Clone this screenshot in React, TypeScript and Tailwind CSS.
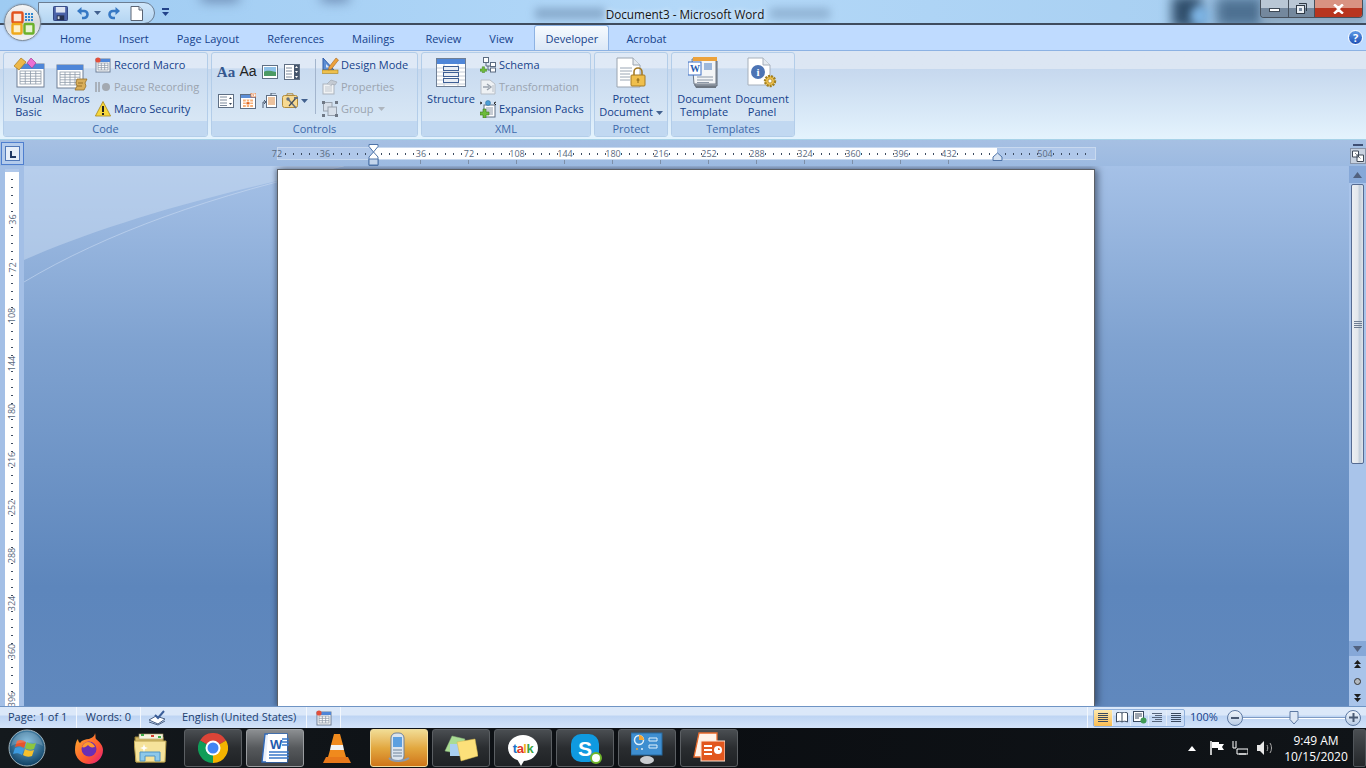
import React from 'react';

const FONT = "font-['Open_Sans','Noto_Sans',sans-serif]";

const SheetGrid = ({ x, y, w, h, cols = 4, rows = 5 }: { x: number; y: number; w: number; h: number; cols?: number; rows?: number }) => (
  <g stroke="#8d99a8" strokeWidth="0.8">
    <rect x={x} y={y} width={w} height={h} fill="#fff" />
    {Array.from({ length: rows - 1 }, (_, i) => (
      <line key={i} x1={x} x2={x + w} y1={y + ((i + 1) * h) / rows} y2={y + ((i + 1) * h) / rows} />
    ))}
    {Array.from({ length: cols - 1 }, (_, i) => (
      <line key={i} y1={y} y2={y + h} x1={x + ((i + 1) * w) / cols} x2={x + ((i + 1) * w) / cols} />
    ))}
  </g>
);

const VisualBasicIcon = () => (
  <svg width="32" height="32" viewBox="0 0 32 32">
    <rect x="4" y="7" width="27" height="23" fill="#fff" stroke="#6f7f95" />
    <rect x="4" y="7" width="27" height="5" fill="#4f86d8" />
    <SheetGrid x={7} y={14} w={21} h={13} />
    <path d="M1 9l7-8 5 4-7 8z" fill="#eeb849" stroke="#a97a1a" strokeWidth="0.7" />
    <path d="M14 6l4-5 5 5-4 5z" fill="#ec6fd3" stroke="#a53e95" strokeWidth="0.7" />
  </svg>
);

const MacrosIcon = () => (
  <svg width="32" height="32" viewBox="0 0 32 32" className="overflow-visible">
    <rect x="2" y="8" width="26" height="23" fill="#fff" stroke="#6f7f95" />
    <rect x="2" y="8" width="26" height="5" fill="#4f86d8" />
    <SheetGrid x={5} y={15} w={20} h={13} />
    <path d="M22 22h10l-2 4 1 3-2 4H20l2-4-1-3z" fill="#d9ae5a" stroke="#96702a" strokeWidth="0.8" />
    <path d="M23 26h5M22 29h5" stroke="#96702a" />
  </svg>
);

const RecordIcon = () => (
  <svg width="16" height="16" viewBox="0 0 16 16">
    <rect x="1" y="2" width="14" height="13" fill="#fff" stroke="#6f7f95" />
    <rect x="1" y="2" width="14" height="3" fill="#4f86d8" />
    <SheetGrid x={3} y={6} w={10} h={7} cols={3} rows={3} />
    <circle cx="3" cy="3" r="2.6" fill="#e2503c" />
  </svg>
);

const PauseIcon = () => (
  <svg width="16" height="16" viewBox="0 0 16 16">
    <rect x="0" y="3" width="2" height="10" fill="#a9b1bb" />
    <rect x="3" y="3" width="2" height="10" fill="#a9b1bb" />
    <circle cx="11" cy="8" r="4" fill="#a3a9b1" />
  </svg>
);

const WarningIcon = () => (
  <svg width="16" height="16" viewBox="0 0 16 16">
    <path d="M8 .5L15.6 15H.4z" fill="#f6d73c" stroke="#a8871a" strokeWidth="0.8" />
    <rect x="7" y="5" width="2" height="6" fill="#222" />
    <rect x="7" y="12" width="2" height="2" fill="#222" />
  </svg>
);

const PictureIcon = () => (
  <svg width="16" height="16" viewBox="0 0 16 16">
    <rect x=".5" y="1.5" width="15" height="13" fill="#fff" stroke="#5f6f84" />
    <rect x="2" y="3" width="12" height="5" fill="#8fc1e8" />
    <path d="M2 12V8c3-2 6-1 12 0v4z" fill="#4c9a63" />
  </svg>
);

const ComboIcon = () => (
  <svg width="16" height="16" viewBox="0 0 16 16">
    <rect x=".5" y=".5" width="15" height="15" fill="#fff" stroke="#5f6f84" />
    <rect x="10" y="1" width="5" height="14" fill="#46566c" />
    <path d="M2 4h6M2 7h6M2 10h6M2 13h6" stroke="#7d8a9c" />
    <path d="M11 4h3l-1.5-2zM11 7h3l-1.5 2zM11 12h3l-1.5 2z" fill="#fff" />
  </svg>
);

const SpinIcon = () => (
  <svg width="16" height="16" viewBox="0 0 16 16">
    <rect x=".5" y="1.5" width="15" height="13" fill="#fff" stroke="#5f6f84" />
    <path d="M2 4h7M2 7h7M2 10h7M2 12.5h7" stroke="#7d8a9c" />
    <path d="M11 6h3l-1.5-2zM11 10h3l-1.5 2z" fill="#3a4a5e" />
  </svg>
);

const CalendarIcon = () => (
  <svg width="16" height="16" viewBox="0 0 16 16">
    <rect x=".5" y="1.5" width="15" height="14" fill="#fff" stroke="#5f6f84" />
    <rect x="1" y="2" width="14" height="3" fill="#5c8ed6" />
    <rect x="11" y="0" width="5" height="4" fill="#fff" stroke="#d96b2b" strokeWidth="0.8" />
    <path d="M12 1.500h2.500L13.200 3z" fill="#d96b2b" />
    <rect x="3" y="6.500" width="10" height="7.500" fill="#f6b07a" />
    <path d="M3 9h10M3 11.500h10M6.300 6.500v7.500M9.700 6.500v7.500" stroke="#fff" />
    <rect x="6.500" y="9.200" width="3" height="2.200" fill="#e2641c" />
  </svg>
);

const LegacyIcon = () => (
  <svg width="16" height="16" viewBox="0 0 16 16">
    <rect x="4.5" y="2.5" width="10" height="12" fill="#fff" stroke="#5f6f84" />
    <path d="M6 5h7M6 7h7M6 9h7M6 11h7" stroke="#d7853e" />
    <path d="M1 15V9h3M2 7l2 2-2 2M9 2V0h5" fill="none" stroke="#4a5a70" />
  </svg>
);

const ToolsIcon = () => (
  <svg width="18" height="17" viewBox="0 0 18 17">
    <rect x=".5" y="2.500" width="15" height="12" rx="2" fill="#f6d991" stroke="#b08a3c" />
    <path d="M5 2.500V.8h6v1.700" fill="none" stroke="#b08a3c" />
    <path d="M6 6l8 9" stroke="#66707e" strokeWidth="1.600" />
    <path d="M14 5l-7 8" stroke="#3f4a58" strokeWidth="1.200" />
    <path d="M12 4h4v2h-4z" fill="#66707e" />
    <circle cx="6" cy="6" r="1.700" fill="#66707e" />
  </svg>
);

const DesignIcon = () => (
  <svg width="17" height="17" viewBox="0 0 17 17">
    <path d="M1 1v12h11z" fill="#5c8ed6" stroke="#2c5aa8" />
    <path d="M4 7v3.5h3.5z" fill="#dbe6f4" />
    <rect x="0" y="13" width="16" height="3.5" fill="#eec04d" stroke="#a5801f" strokeWidth="0.6" />
    <path d="M7 10l7-9 2.5 2-7 9-3 1z" fill="#eca23c" stroke="#a8641c" strokeWidth="0.6" />
  </svg>
);

const PropertiesIcon = () => (
  <svg width="16" height="16" viewBox="0 0 16 16">
    <rect x="1" y="5" width="11" height="10" fill="#f0f2f4" stroke="#abb3bd" />
    <path d="M3 8h7M3 10h7M3 12h7" stroke="#c1c7ce" />
    <path d="M5 5l4-4 6 2-2 3-3-1-1 2" fill="#c4cad2" stroke="#a3abb5" strokeWidth="0.7" />
  </svg>
);

const GroupIcon = () => (
  <svg width="16" height="16" viewBox="0 0 16 16">
    <rect x="1.5" y="1.5" width="8.5" height="8.5" fill="#d7dfe9" stroke="#98a1ad" />
    <rect x="6" y="6" width="8.5" height="8.5" fill="#d7dfe9" stroke="#98a1ad" />
    <path d="M0 0h3v3H0zM13 0h3v3h-3zM0 13h3v3H0zM13 13h3v3h-3z" fill="#6f7885" />
  </svg>
);

const StructureIcon = () => (
  <svg width="30" height="30" viewBox="0 0 30 30">
    <rect x=".5" y=".5" width="29" height="28" fill="#fff" stroke="#6f7f95" />
    <rect x="1" y="1" width="28" height="5" fill="#4f86d8" />
    <path d="M1 10h28M1 14h28M1 18h28M1 22h28M1 26h28M8 6v22M22 6v22" stroke="#c5ccd6" />
    <g fill="#e8edf5" stroke="#3e5f95">
      <rect x="7.5" y="8.5" width="15" height="4" />
      <rect x="7.5" y="14.5" width="15" height="4" />
      <rect x="7.5" y="20.5" width="15" height="4" />
    </g>
  </svg>
);

const SchemaIcon = () => (
  <svg width="16" height="16" viewBox="0 0 16 16">
    <g fill="#fff" stroke="#5a6a80">
      <rect x="3.5" y=".5" width="5" height="5" />
      <rect x="10.5" y="5.5" width="5" height="4" />
      <rect x="10.5" y="11" width="5" height="4" />
    </g>
    <path d="M6 6v3h4M8 9v4h2" fill="none" stroke="#5a6a80" />
    <path d="M3 8v3H0v3h3v2h3v-2h3v-3H6V8z" fill="#6dbb3c" stroke="#3d7a1e" strokeWidth="0.6" transform="scale(.75) translate(0 5)" />
  </svg>
);

const TransformIcon = () => (
  <svg width="16" height="16" viewBox="0 0 16 16">
    <path d="M1 1h9l5 4v10H1z" fill="#eef1f4" stroke="#b6bdc6" />
    <path d="M3 8h6M7 5l4 3-4 3" fill="none" stroke="#9aa2ad" strokeWidth="1.4" />
    <path d="M13 6v7" stroke="#b6bdc6" />
  </svg>
);

const ExpansionIcon = () => (
  <svg width="16" height="18" viewBox="0 0 16 18">
    <rect x="4" y="5" width="11" height="12" fill="#fff" stroke="#5f6f84" />
    <path d="M6 8h7M6 10h7M6 12h7M6 14h7" stroke="#8d99a8" />
    <path d="M2 3L0 2m2 1L0 4M14 3l2-1m-2 1l2 2" stroke="#222" />
    <circle cx="8" cy="3" r="2.5" fill="#4d9fd6" stroke="#2c6a98" strokeWidth="0.5" />
    <path d="M3 9v3H0v3h3v3h3v-3h3v-3H6V9z" fill="#6dbb3c" stroke="#3d7a1e" strokeWidth="0.6" />
  </svg>
);

const ProtectIcon = () => (
  <svg width="32" height="32" viewBox="0 0 32 32">
    <path d="M2 1h16l7 7v22H2z" fill="#fff" stroke="#9aa4b0" />
    <path d="M18 1v7h7" fill="#e4e9ef" stroke="#9aa4b0" />
    <path d="M5 11h12M5 14h12M5 17h10M5 20h10M5 23h10" stroke="#9aa6b4" />
    <path d="M19 18v-3a4 4 0 018 0v3" fill="none" stroke="#a47a25" strokeWidth="1.6" />
    <rect x="16" y="18" width="14" height="11" rx="1" fill="#efbf4c" stroke="#a47a25" />
    <path d="M23 21v5M21.5 23h3" stroke="#8a6415" />
  </svg>
);

const TemplateIcon = () => (
  <svg width="32" height="32" viewBox="0 0 32 32">
    <path d="M5 4h24v25H7z" fill="#aab2bc" stroke="#5d6672" />
    <path d="M4 2h24v25H6z" fill="#f3f5f7" stroke="#6c7684" />
    <rect x="5" y="0" width="24" height="4" fill="#eca23c" />
    <rect x="0" y="5" width="13" height="13" fill="#fff" stroke="#3c6fc4" />
    <text x="2" y="15" fontSize="10" fontWeight="700" fill="#2a5db0" fontFamily="Liberation Serif, serif">W</text>
    <rect x="16" y="6" width="8" height="7" fill="#9db8dc" />
    <path d="M9 20h16M9 23h16M9 25.5h12" stroke="#8d99a8" />
    <path d="M7 29h21v2H8z" fill="#6e7782" />
  </svg>
);

const PanelIcon = () => (
  <svg width="32" height="32" viewBox="0 0 32 32">
    <path d="M2 1h15l7 7v20H2z" fill="#fff" stroke="#a7b0bb" />
    <path d="M17 1v7h7" fill="#e4e9ef" stroke="#a7b0bb" />
    <circle cx="12" cy="15" r="7" fill="#4d74b4" />
    <text x="12" y="19" fontSize="11" fontWeight="700" textAnchor="middle" fill="#fff" fontFamily="Liberation Serif, serif">i</text>
    <circle cx="24" cy="24" r="5" fill="#eec04d" stroke="#a3801f" strokeWidth="2.4" strokeDasharray="2 1" />
    <circle cx="24" cy="24" r="2" fill="#fff" stroke="#a3801f" strokeWidth="0.7" />
  </svg>
);

const OfficeLogo = () => (
  <svg width="24" height="24" viewBox="0 0 24 24">
    <rect x="1.500" y="1.500" width="10" height="10" rx="1" fill="#fbe7d8" stroke="#e2531c" strokeWidth="2.400" />
    <rect x="1.500" y="13" width="9" height="9.500" rx="1" fill="#fdf0c8" stroke="#f0a91c" strokeWidth="2.400" />
    <rect x="13.500" y="13" width="9" height="9.500" rx="1" fill="#e7f3d0" stroke="#6cb12a" strokeWidth="2.400" />
    <g fill="#2f86cf">
      <rect x="14" y="2" width="2" height="2" />
      <rect x="17" y="2" width="2" height="2" />
      <rect x="20" y="2" width="2" height="2" />
      <rect x="14" y="5" width="2" height="2" />
      <rect x="17" y="5" width="2" height="2" />
      <rect x="20" y="5" width="2" height="2" />
      <rect x="14" y="8" width="2" height="2" />
      <rect x="17" y="8" width="2" height="2" />
      <rect x="20" y="8" width="2" height="2" />
    </g>
  </svg>
);

const SaveIcon = () => (
  <svg width="15" height="15" viewBox="0 0 16 16">
    <rect x=".5" y=".5" width="15" height="15" rx="1" fill="#4a62a8" stroke="#2c3f7c" />
    <rect x="3" y="1" width="10" height="6" fill="#dde4f2" />
    <rect x="4" y="10" width="8" height="5" fill="#25304f" />
    <rect x="5" y="11" width="2" height="3" fill="#c8d0e0" />
  </svg>
);

const UndoIcon = ({ flip = false }: { flip?: boolean }) => (
  <svg width="14" height="14" viewBox="0 0 14 14" className={flip ? '-scale-x-100' : ''}>
    <path d="M3 5h5a3.5 3.5 0 010 7H6" fill="none" stroke="#3678c4" strokeWidth="2.6" />
    <path d="M5.5 1v8L1 5z" fill="#3678c4" />
  </svg>
);

const Caret = ({ color = '#42618f' }: { color?: string }) => (
  <svg width="7" height="4" viewBox="0 0 7 4">
    <path d="M0 0h7L3.5 4z" fill={color} />
  </svg>
);

const LargeButton = ({ icon, lines, w, caret }: { icon: React.ReactNode; lines: string[]; w: string; caret?: boolean }) => (
  <div className={`flex shrink-0 flex-col items-center ${w}`}>
    <div className="flex h-[36px] items-center justify-center pt-[2px]">{icon}</div>
    <div className="mt-[2px] text-center leading-[13px] whitespace-nowrap">
      {lines.map((l, i) => (
        <div key={l}>
          {l}
          {caret && i === lines.length - 1 && <span className="ml-[3px] inline-block align-middle"><Caret /></span>}
        </div>
      ))}
    </div>
  </div>
);

const SmallButton = ({ icon, label, disabled, caret }: { icon: React.ReactNode; label: string; disabled?: boolean; caret?: boolean }) => (
  <div className={`flex h-[22px] items-center whitespace-nowrap ${disabled ? 'text-[#9ba4b0]' : ''}`}>
    <span className="flex w-[18px] shrink-0 items-center">{icon}</span>
    <span className="ml-px">{label}</span>
    {caret && <span className="ml-[4px]"><Caret color="#aeb5be" /></span>}
  </div>
);

const Group = ({ title, w, children }: { title: string; w: string; children: React.ReactNode }) => (
  <div className={`flex h-[85px] shrink-0 flex-col overflow-hidden rounded-[3px] border border-[#b3cde9] bg-gradient-to-b from-[#dfe9f6] from-[18%] via-[#c9dbf0] via-[19%] to-[#dceaf6] ${w}`}>
    <div className="h-[68px] flex-1">{children}</div>
    <div className="h-[15px] bg-[#c1d8f1] text-center leading-[15px] text-[#3e6aaa]">{title}</div>
  </div>
);

const TABS = ['Home', 'Insert', 'Page Layout', 'References', 'Mailings', 'Review', 'View'];

const TitleBar = () => (
  <div className="relative h-[25px] shrink-0 overflow-hidden border-b-2 border-[#3f4c5e] bg-gradient-to-r from-[#9ecbf2] via-[#b3d8f8] to-[#a5cdf0]">
    <div className="absolute left-[200px] top-[-8px] h-[10px] w-[40px] rounded-full bg-[#6a88b0] blur-[6px]" />
    <div className="absolute left-[320px] top-[-8px] h-[10px] w-[30px] rounded-full bg-[#6a88b0] blur-[6px]" />
    <div className="absolute left-[535px] top-[8px] h-[11px] w-[70px] bg-[#5f7ea0] opacity-50 blur-[4px]" />
    <div className="absolute left-[770px] top-[8px] h-[11px] w-[60px] bg-[#5f7ea0] opacity-40 blur-[4px]" />
    <div className="absolute left-[1172px] top-[-4px] h-[32px] w-[30px] bg-[#2f4d6a] blur-[6px]" />
    <div className="absolute left-[1215px] top-[-4px] h-[32px] w-[50px] bg-[#4d7091] blur-[7px]" />
    <div className="absolute left-[1262px] top-0 h-[25px] w-[104px] bg-[#8ba6be] blur-[4px]" />
    <div className="absolute left-[1190px] top-[6px] h-[20px] w-[20px] rounded-full bg-[#7db4e4] blur-[4px]" />

    {/* quick access toolbar */}
    <div className="absolute left-[38px] top-[2px] flex h-[22px] w-[117px] items-center rounded-r-[12px] border border-[#6b7d92] bg-gradient-to-b from-[#cfe6fa] to-[#b4d5f2] pl-[14px]">
      <SaveIcon />
      <span className="ml-[8px]"><UndoIcon /></span>
      <span className="ml-[4px]"><Caret /></span>
      <span className="ml-[6px]"><UndoIcon flip /></span>
      <span className="ml-[9px]">
        <svg width="13" height="15" viewBox="0 0 13 15">
          <path d="M1 .5h8l3.5 3.5v10.5H1z" fill="#fff" stroke="#5a6474" />
          <path d="M9 .5V4h3.5" fill="#dfe4ea" stroke="#5a6474" />
        </svg>
      </span>
    </div>
    <div className="absolute left-[162px] top-[8px] flex flex-col items-center gap-[2px]">
      <div className="h-[2px] w-[7px] bg-[#22438a]" />
      <Caret color="#22438a" />
    </div>

    <div className="relative flex h-full items-center justify-center pl-[4px] pt-[6px] text-[11.75px] text-[#151515] [text-shadow:0_0_5px_#ffffff]">
      Document3 - Microsoft Word
    </div>

    {/* window buttons */}
    <div className="absolute right-[3px] top-0 flex h-[18px] w-[103px] overflow-hidden rounded-b-[4px] border border-t-0 border-[#46505c]">
      <div className="flex w-[28px] items-center justify-center border-r border-[#46505c] bg-gradient-to-b from-[#b9c7d5] from-50% to-[#74889d] to-50%">
        <div className="mt-[3px] h-[4px] w-[11px] border border-[#3d4854] bg-white" />
      </div>
      <div className="flex w-[26px] items-center justify-center border-r border-[#46505c] bg-gradient-to-b from-[#b9c7d5] from-50% to-[#74889d] to-50%">
        <svg width="11" height="11" viewBox="0 0 11 11">
          <path d="M3 .5h7.5V8" fill="none" stroke="#2f3a46" />
          <rect x=".5" y="2.5" width="8" height="8" fill="#e9eef3" stroke="#2f3a46" />
          <rect x="3" y="5" width="3" height="3" fill="#75899e" />
        </svg>
      </div>
      <div className="flex flex-1 items-center justify-center bg-gradient-to-b from-[#d99382] from-50% to-[#b8351f] to-50%">
        <svg width="11" height="10" viewBox="0 0 11 10">
          <path d="M1 .5l4.5 3.5L10 .5M1 9.5L5.5 6 10 9.5M2 1l7 8M9 1L2 9" fill="none" stroke="#fff" strokeWidth="2.4" />
        </svg>
      </div>
    </div>
  </div>
);

const OfficeButton = () => (
  <div className="absolute left-[4px] top-[4px] z-10 flex h-[37px] w-[37px] items-center justify-center rounded-full border border-[#7f8c9a] bg-gradient-to-b from-[#f6f7f8] via-[#d6d9dc] to-[#f2f3f3] shadow-[0_0_2px_#7d8fa5]">
    <OfficeLogo />
  </div>
);

const TabsRow = () => (
  <div className="flex h-[25px] shrink-0 items-end bg-[#bfdbff] pl-[46px] text-[#15428b]">
    {TABS.map((t) => (
      <div key={t} className={`flex h-[24px] items-center px-[14px] pt-[2px] whitespace-nowrap ${t === 'Review' ? 'ml-[3px]' : ''}`}>
        {t}
      </div>
    ))}
    <div className="ml-[7px] flex h-[25px] w-[75px] items-center justify-center rounded-t-[3px] border border-b-0 border-[#8db2e3] bg-gradient-to-b from-[#f6fafe] to-[#dbe8f7] pt-[2px]">
      Developer
    </div>
    <div className="flex h-[24px] items-center px-[17px] pt-[2px]">Acrobat</div>
    <div className="mb-[5px] ml-auto mr-[3px] flex h-[15px] w-[15px] items-center justify-center rounded-full border border-white bg-gradient-to-b from-[#5f9ae6] to-[#1f4fb5] text-[11px] leading-none font-bold text-white">
      ?
    </div>
  </div>
);

const Ribbon = () => (
  <div className="flex h-[90px] shrink-0 gap-[3px] border-y border-t-[#8db2e3] border-b-[#a7d2e8] bg-gradient-to-b from-[#dce6f3] from-[20%] via-[#c6d8ee] via-[21%] to-[#e4f3fd] pl-[3px] pt-[1px] text-[#15428b]">
    <Group title="Code" w="w-[205px]">
      <div className="flex pt-[1px] pl-px">
        <LargeButton icon={<VisualBasicIcon />} lines={['Visual', 'Basic']} w="w-[47px]" />
        <LargeButton icon={<MacrosIcon />} lines={['Macros']} w="w-[38px]" />
        <div className="ml-[5px]">
          <SmallButton icon={<RecordIcon />} label="Record Macro" />
          <SmallButton icon={<PauseIcon />} label="Pause Recording" disabled />
          <SmallButton icon={<WarningIcon />} label="Macro Security" />
        </div>
      </div>
    </Group>
    <Group title="Controls" w="w-[207px]">
      <div className="flex pt-[1px]">
        <div className="ml-[3px] grid h-[62px] w-[88px] grid-cols-4 grid-rows-2 items-center justify-items-center pt-[3px]">
          <span className="font-['Liberation_Serif',serif] text-[15px] font-bold text-[#33578f]">Aa</span>
          <span className="font-['Liberation_Sans',sans-serif] text-[14px] text-[#222]">Aa</span>
          <PictureIcon />
          <ComboIcon />
          <SpinIcon />
          <CalendarIcon />
          <LegacyIcon />
          <div className="ml-[6px] flex items-center gap-px"><ToolsIcon /><Caret /></div>
        </div>
        <div className="ml-[12px] mr-[6px] mt-[5px] h-[55px] w-px bg-[#a3b5cd]" />
        <div>
          <SmallButton icon={<DesignIcon />} label="Design Mode" />
          <SmallButton icon={<PropertiesIcon />} label="Properties" disabled />
          <SmallButton icon={<GroupIcon />} label="Group" disabled caret />
        </div>
      </div>
    </Group>
    <Group title="XML" w="w-[170px]">
      <div className="flex pt-[1px]">
        <LargeButton icon={<StructureIcon />} lines={['Structure']} w="w-[52px] ml-[3px]" />
        <div className="ml-[3px]">
          <SmallButton icon={<SchemaIcon />} label="Schema" />
          <SmallButton icon={<TransformIcon />} label="Transformation" disabled />
          <SmallButton icon={<ExpansionIcon />} label="Expansion Packs" />
        </div>
      </div>
    </Group>
    <Group title="Protect" w="w-[74px]">
      <div className="flex justify-center pt-[1px]">
        <LargeButton icon={<ProtectIcon />} lines={['Protect', 'Document']} w="w-[70px]" caret />
      </div>
    </Group>
    <Group title="Templates" w="w-[124px]">
      <div className="flex pt-[1px] pl-[2px]">
        <LargeButton icon={<TemplateIcon />} lines={['Document', 'Template']} w="w-[60px]" />
        <LargeButton icon={<PanelIcon />} lines={['Document', 'Panel']} w="w-[56px]" />
      </div>
    </Group>
  </div>
);

// one cell is 8px on screen, which is 6pt on the ruler
const hCells = Array.from({ length: 102 }, (_, i) => i);
const vCells = Array.from({ length: 68 }, (_, i) => i);
const tabStops = Array.from({ length: 12 }, (_, i) => i);

const HRuler = () => (
  <div className="relative flex h-[26px] shrink-0 items-start bg-gradient-to-b from-[#a6c0e3] to-[#9cbae1]">
    <div className="ml-px mt-[2px] flex h-[23px] w-[23px] items-center justify-center border border-[#4f7fcf] bg-[#b3cbec]">
      <div className="flex h-[15px] w-[15px] items-center justify-center border border-[#5078b8] bg-[#e6eef9]">
        <div className="mt-[1px] h-[7px] w-[6px] border-b-2 border-l-2 border-[#1f3864]" />
      </div>
    </div>
    <div className="relative ml-[253px] mt-[7px] flex h-[13px] w-[819px] border border-[#c8d9ef] bg-[#b0c8ea]">
      <div className="ml-[95px] h-full w-[624px] bg-white" />
      <div className="absolute left-[-1px] top-[-1px] flex h-[13px] items-center">
        {hCells.map((i) => (
          <div key={i} className={`flex h-full w-2 shrink-0 items-center justify-center ${i === 0 ? '-ml-1' : ''}`}>
            {i === 12 || i === 90 ? null : i % 6 === 0 ? (
              <span className="text-[9px] leading-none text-[#5a6a80]">{Math.abs((i - 12) * 6)}</span>
            ) : (
              <div className="h-[2px] w-px bg-[#3c4b60]" />
            )}
          </div>
        ))}
      </div>
    </div>
    {/* default tab stops under the ruler */}
    <div className="absolute left-[420px] top-[20px] flex">
      {tabStops.map((i) => (
        <div key={i} className="h-[4px] w-[48px]"><div className="h-full w-px bg-[#7d8fa8]" /></div>
      ))}
    </div>
    {/* indent markers */}
    <svg className="absolute left-[368px] top-[4px]" width="11" height="22" viewBox="0 0 11 22">
      <path d="M1 .5h9v2L5.5 8 10 13v8.5H1V13l4.5-5L1 2.5z" fill="#fff" stroke="#4f74a8" />
      <path d="M1 15h9v6H1z" fill="#c3d5ec" stroke="#4f74a8" />
    </svg>
    <svg className="absolute left-[992px] top-[12px]" width="11" height="9" viewBox="0 0 11 9">
      <path d="M1 8.5V5l4.5-4L10 5v3.5z" fill="#d6e2f2" stroke="#4f74a8" />
    </svg>
    <div className="absolute right-0 top-[4px] flex w-[17px] flex-col items-center">
      <div className="h-[2px] w-[10px] bg-[#3f4f73]" />
      <div className="mt-[2px] flex h-[16px] w-[16px] items-center justify-center border border-[#8894a8] bg-[#c7d1df]">
        <svg width="12" height="12" viewBox="0 0 12 12">
          <path d="M.5 1h6v6h-6zM5 5h6.5v6.5H5z" fill="#fff" stroke="#3f4856" />
          <path d="M3 3l6 6" stroke="#3f4856" strokeDasharray="1 1" />
        </svg>
      </div>
    </div>
  </div>
);

const VRuler = () => (
  <div className="flex w-[24px] shrink-0 justify-start bg-[#a3bfe6] pl-[5px] pt-[3px]">
    <div className="relative h-full w-[14px] overflow-hidden bg-white">
      <div className="absolute left-0 top-0 h-[3px] w-full bg-[#b0c8ea]" />
      <div className="-mt-[2px] flex flex-col items-center">
        {vCells.map((i) => (
          <div key={i} className="flex h-2 w-full shrink-0 items-center justify-center">
            {i === 0 ? null : i % 6 === 0 ? (
              <span className="-rotate-90 text-[9px] leading-none whitespace-nowrap text-[#5a6a80]">{i * 6}</span>
            ) : (
              <div className="h-px w-[2px] bg-[#3c4b60]" />
            )}
          </div>
        ))}
      </div>
    </div>
  </div>
);

const Canvas = () => (
  <div className="relative min-w-0 flex-1 overflow-hidden bg-[linear-gradient(#a5c1e7_0%,#7fa2d0_33%,#5d86bc_78%,#6088bd_100%)] pl-[253px] pt-[3px]">
    <svg className="absolute left-0 top-0" width="320" height="130" viewBox="0 0 320 130">
      <path d="M0 94C90 55 190 28 320 0H0z" fill="#c9dbf2" opacity="0.5" />
      <path d="M0 116C80 68 190 28 320 0" fill="none" stroke="#c9dbf2" strokeWidth="1" opacity="0.6" />
    </svg>
    <div className="relative h-full w-[818px] border-x border-t border-[#5c6066] bg-white shadow-[3px_0_7px_rgba(30,40,60,0.55),-2px_0_4px_rgba(30,40,60,0.3)]" />
  </div>
);

const Scrollbar = () => (
  <div className="flex w-[17px] shrink-0 flex-col bg-[#a9c4ea]">
    <div className="flex h-[17px] shrink-0 items-center justify-center bg-[#86a8d8]">
      <svg width="9" height="6" viewBox="0 0 9 6"><path d="M0 6l4.5-6L9 6z" fill="#51617f" /></svg>
    </div>
    <div className="ml-[2px] mr-[2px] mt-px flex h-[280px] shrink-0 flex-col items-center justify-center gap-[1px] rounded-[2px] border border-[#566b92] bg-[linear-gradient(90deg,#eceff3_0%,#e3e7ec_50%,#c3cedb_70%,#dfe4ea_100%)]">
      <div className="h-px w-[8px] bg-[#6f7d92]" />
      <div className="h-px w-[8px] bg-[#6f7d92]" />
      <div className="h-px w-[8px] bg-[#6f7d92]" />
      <div className="h-px w-[8px] bg-[#6f7d92]" />
    </div>
    <div className="flex-1" />
    <div className="flex h-[15px] shrink-0 items-center justify-center bg-[#86a8d8]">
      <svg width="9" height="6" viewBox="0 0 9 6"><path d="M0 0l4.5 6L9 0z" fill="#51617f" /></svg>
    </div>
    <div className="flex h-[17px] shrink-0 items-center justify-center">
      <svg width="9" height="9" viewBox="0 0 9 9"><path d="M1 4l3.5-4L8 4zM1 8l3.5-4L8 8z" fill="#1d1d1d" /></svg>
    </div>
    <div className="flex h-[16px] shrink-0 items-center justify-center">
      <div className="h-[7px] w-[7px] rounded-full border border-[#333] bg-[#b4b9bf]" />
    </div>
    <div className="flex h-[17px] shrink-0 items-center justify-center">
      <svg width="9" height="9" viewBox="0 0 9 9"><path d="M1 1l3.5 4L8 1zM1 5l3.5 4L8 5z" fill="#1d1d1d" /></svg>
    </div>
  </div>
);

const StatusBar = () => (
  <div className="flex h-[22px] shrink-0 items-stretch border-t border-[#6f94c4] bg-gradient-to-b from-[#dbe8f9] from-[40%] via-[#bdd4f3] via-[41%] to-[#d3e3f9] text-[#22406f]">
    <div className="flex w-[77px] items-center border-r border-[#f2f7fd] pl-[8px]">Page: 1 of 1</div>
    <div className="flex w-[64px] items-center justify-center border-r border-[#f2f7fd]">Words: 0</div>
    <div className="flex w-[166px] items-center border-r border-[#f2f7fd] pl-[7px]">
      <svg width="19" height="16" viewBox="0 0 19 16">
        <path d="M1 10l7-4 9 3-7 5z" fill="#fff" stroke="#4d6386" />
        <path d="M1 12l9 3 7-4" fill="none" stroke="#4d6386" />
        <path d="M7 5l3 3 6-7" fill="none" stroke="#3c5f9a" strokeWidth="2" />
      </svg>
      <span className="ml-[15px] whitespace-nowrap">English (United States)</span>
    </div>
    <div className="flex w-[34px] items-center justify-center border-r border-[#f2f7fd]">
      <RecordIcon />
    </div>
    <div className="ml-auto flex h-full items-center border-l border-[#f2f7fd] pl-[5px]">
      <div className="flex h-[18px] w-[92px] overflow-hidden rounded-[2px] border border-[#8fb0dc]">
        <div className="flex w-[18px] flex-col items-center justify-center gap-px bg-gradient-to-b from-[#fde9ae] to-[#f9bc4e]">
          {[0, 1, 2, 3, 4].map((i) => <div key={i} className="h-px w-[10px] bg-[#3a4a60]" />)}
        </div>
        <div className="flex w-[18px] items-center justify-center border-l border-[#e3edf9]">
          <svg width="12" height="11" viewBox="0 0 12 11">
            <path d="M.5 1c2-1 4-1 5.5 0 1.5-1 3.500-1 5.500 0v9c-2-1-4-1-5.500 0-1.500-1-3.500-1-5.500 0zM6 1v9" fill="#fff" stroke="#3a4a60" />
          </svg>
        </div>
        <div className="flex w-[18px] items-center justify-center border-l border-[#e3edf9]">
          <svg width="14" height="13" viewBox="0 0 14 13">
            <rect x=".5" y=".5" width="10" height="10" fill="#fff" stroke="#3a4a60" />
            <path d="M2 3h7M2 5h7M2 7h4" stroke="#3a4a60" />
            <circle cx="10.500" cy="9.500" r="3" fill="#3f9a55" />
          </svg>
        </div>
        <div className="flex w-[18px] flex-col items-end justify-center gap-px border-l border-[#e3edf9] pr-[4px]">
          {[10, 7, 10, 7, 10].map((n, i) => <div key={i} className={`h-px bg-[#56657c] ${n === 10 ? 'w-[10px]' : 'w-[7px]'}`} />)}
        </div>
        <div className="flex flex-1 flex-col items-center justify-center gap-px border-l border-[#e3edf9]">
          {[0, 1, 2, 3, 4].map((i) => <div key={i} className="h-px w-[10px] bg-[#3a4a60]" />)}
        </div>
      </div>
      <span className="ml-[5px] w-[37px] text-[#15428b]">100%</span>
      <div className="flex h-[16px] w-[16px] items-center justify-center rounded-full border border-[#5d79a3] bg-gradient-to-b from-[#f0f5fb] to-[#b9cce6]">
        <div className="h-[2px] w-[8px] bg-[#4a5a73]" />
      </div>
      <div className="relative flex h-[16px] w-[102px] items-center">
        <div className="h-[2px] w-full border-t border-[#7f9bc3] bg-white" />
        <svg className="absolute left-[46px] top-[1px]" width="10" height="14" viewBox="0 0 10 14">
          <path d="M1 .5h8v8L5 13 1 8.500z" fill="#dde7f5" stroke="#5d79a3" />
        </svg>
      </div>
      <div className="mr-[5px] flex h-[16px] w-[16px] items-center justify-center rounded-full border border-[#5d79a3] bg-gradient-to-b from-[#f0f5fb] to-[#b9cce6]">
        <svg width="9" height="9" viewBox="0 0 9 9"><path d="M3.500 0h2v3.500H9v2H5.500V9h-2V5.500H0v-2h3.500z" fill="#4a5a73" /></svg>
      </div>
    </div>
  </div>
);

const Orb = () => (
  <svg width="38" height="38" viewBox="0 0 38 38">
    <defs>
      <radialGradient id="orb" cx="50%" cy="35%" r="65%">
        <stop offset="0" stopColor="#6fb4dc" />
        <stop offset="1" stopColor="#0f3f62" />
      </radialGradient>
    </defs>
    <circle cx="19" cy="19" r="18" fill="url(#orb)" stroke="#9fb3bd" />
    <path d="M9 12c3-2 6-1 9 1l-2 6c-3-2-6-2-9-1z" fill="#e8542a" />
    <path d="M19 13c3 2 6 2 9 1l-2 6c-3 1-6 1-9-1z" fill="#8dc63f" />
    <path d="M7 19c3-1 6-1 9 1l-2 6c-3-2-6-2-9-1z" fill="#3d9be0" />
    <path d="M17 20c3 2 6 2 9 1l-2 6c-3 1-6 1-9-1z" fill="#f6c02c" />
    <path d="M3 17C5 7 12 3 19 3s14 4 16 14c-10-5-22-5-32 0z" fill="#fff" opacity="0.18" />
  </svg>
);

const Firefox = () => (
  <svg width="32" height="32" viewBox="0 0 32 32">
    <defs>
      <linearGradient id="fx" x1="0" x2="1" y1="0" y2="1">
        <stop offset="0" stopColor="#ffb22e" />
        <stop offset="0.6" stopColor="#ff5b2d" />
        <stop offset="1" stopColor="#e31587" />
      </linearGradient>
    </defs>
    <path d="M22 1c1 3 0 5 1 6 4 3 7 7 7 11a14 14 0 01-28 0C2 13 3 9 5 7c0 2 1 3 2 4 2-3 6-4 9-4 3-1 6-3 6-6z" fill="url(#fx)" />
    <circle cx="16" cy="17" r="7.500" fill="#6b2fb5" />
    <path d="M9 15c2 1 4 0 6-2 2 2 3 3 7 2-1-3-4-5-7-5-3 0-5 2-6 5z" fill="#ff9a2e" />
  </svg>
);

const Explorer = () => (
  <svg width="34" height="32" viewBox="0 0 34 32">
    <path d="M1 5h28l1 25H2z" fill="#d4b968" stroke="#9a8436" />
    <rect x="5" y="2" width="24" height="5" fill="#f5f2df" stroke="#a89b63" strokeWidth="0.6" />
    <rect x="7" y="2" width="3" height="2" fill="#3fae4a" />
    <rect x="17" y="3" width="3" height="2" fill="#d8402f" />
    <rect x="24" y="4" width="3" height="2" fill="#3fae4a" />
    <path d="M0 9h32l-1 21H2z" fill="#f6e39b" stroke="#b9a04d" />
    <path d="M6 29V20h20v9h-5v-5H11v5z" fill="#8ec9ea" stroke="#4e94c4" />
    <path d="M10 12l1 3 3 1-3 1-1 3-1-3-3-1 3-1z" fill="#fff" />
  </svg>
);

const Chrome = () => (
  <svg width="30" height="30" viewBox="0 0 30 30">
    <path d="M15 15L2 7.500a15 15 0 0126 0z" fill="#db4437" />
    <path d="M15 15l13-7.500A15 15 0 0115 30z" fill="#f4b400" />
    <path d="M15 15v15A15 15 0 012 7.500z" fill="#0f9d58" />
    <circle cx="15" cy="15" r="7.500" fill="#fff" />
    <circle cx="15" cy="15" r="5.500" fill="#4285f4" />
  </svg>
);

const WordIcon = () => (
  <svg width="30" height="30" viewBox="0 0 30 30">
    <path d="M5 1h22v28H2z" fill="#e9f0fa" stroke="#2f68b8" strokeWidth="1.400" />
    <path d="M8 1h19v28H6z" fill="#fff" />
    <text x="10" y="16" fontSize="13" fontWeight="700" fill="#1f5cae" fontFamily="Liberation Sans, sans-serif">W</text>
    <path d="M22 6h7M22 9h7M22 12h7M9 19h20M9 22h20M9 25h20" stroke="#3a78c8" strokeWidth="1.300" />
  </svg>
);

const Vlc = () => (
  <svg width="28" height="30" viewBox="0 0 28 30">
    <path d="M11 1h6l3 11H8zM7 17h14l2 7H5z" fill="#f08a1d" />
    <path d="M8 12h12l1 5H7z" fill="#f3f3f3" />
    <path d="M3 24h22l3 6H0z" fill="#e8781a" />
  </svg>
);

const Phone = () => (
  <svg width="24" height="32" viewBox="0 0 24 32">
    <rect x="4" y="1" width="13" height="28" rx="5" fill="#dbe4ee" stroke="#6f8298" />
    <rect x="6" y="5" width="9" height="10" fill="#5c9fe0" />
    <path d="M6 18h9M6 21h9M6 24h9" stroke="#6f8298" />
    <path d="M2 26c4 4 14 4 20 0" fill="none" stroke="#8b9ab0" strokeWidth="2" />
  </svg>
);

const Sticky = () => (
  <svg width="34" height="28" viewBox="0 0 34 28">
    <path d="M8 2L21 5 17 20 1 17z" fill="#a9dc94" stroke="#8ab57a" strokeWidth="0.5" />
    <rect x="6" y="10" width="14" height="12" fill="#a9cff0" />
    <path d="M13 8l18-3 3 17-17 5z" fill="#fce07a" stroke="#d4b94f" strokeWidth="0.5" />
  </svg>
);

const Talk = () => (
  <div className="relative flex h-[26px] w-[30px] items-center justify-center rounded-[50%] bg-white font-['Liberation_Sans',sans-serif] text-[13px] leading-none font-bold tracking-[-0.5px]">
    <span className="text-[#1a73c9]">t</span>
    <span className="text-[#e0352b]">a</span>
    <span className="text-[#f2b01e]">l</span>
    <span className="text-[#3aa43f]">k</span>
    <div className="absolute bottom-[-5px] left-[9px] h-0 w-0 border-x-[4px] border-t-[7px] border-x-transparent border-t-white" />
  </div>
);

const Skype = () => (
  <div className="relative flex h-[28px] w-[28px] items-center justify-center rounded-[10px] bg-[#0f9ae0] font-['Liberation_Sans',sans-serif] text-[21px] leading-none font-bold text-white">
    S
    <div className="absolute bottom-[-2px] right-[-3px] h-[12px] w-[12px] rounded-full border-2 border-[#6fb52c] bg-white" />
  </div>
);

const ControlPanel = () => (
  <svg width="32" height="32" viewBox="0 0 32 32">
    <rect x="0" y="1" width="31" height="22" fill="#3e8ed0" stroke="#26689e" />
    <circle cx="8" cy="8" r="4.500" fill="none" stroke="#dff0fb" strokeWidth="1.500" />
    <path d="M8 8V3a5 5 0 015 5z" fill="#f6a531" />
    <path d="M18 6h8v3h-8zM18 13h8v3h-8z" fill="none" stroke="#dff0fb" />
    <circle cx="6" cy="17" r="1" fill="#f6a531" />
    <circle cx="11" cy="17" r="1" fill="#dff0fb" />
    <ellipse cx="16" cy="28" rx="7" ry="4" fill="#c9ccd0" />
  </svg>
);

const PowerPoint = () => (
  <svg width="32" height="32" viewBox="0 0 32 32">
    <path d="M6 1h18v24H1z" fill="#fff3ea" stroke="#e86a2c" strokeWidth="1.300" />
    <rect x="8" y="9" width="24" height="20" fill="#e2571e" stroke="#fbe3d4" />
    <rect x="11" y="13" width="8" height="2" fill="#fff" />
    <rect x="11" y="17" width="8" height="2" fill="#fff" />
    <rect x="11" y="21" width="8" height="2" fill="#fff" />
    <circle cx="25" cy="18" r="4" fill="#fff" />
    <path d="M25 18v-2a2 2 0 012 2z" fill="#e2571e" />
  </svg>
);

const TaskButton = ({ children, look = 'plain' }: { children: React.ReactNode; look?: 'plain' | 'open' | 'word' | 'flash' }) => {
  const looks = {
    plain: '',
    open: 'rounded-[3px] border border-[#5b5f63] bg-gradient-to-b from-[#4a4e52] via-[#2a2d30] to-[#1f2225]',
    word: 'rounded-[3px] border border-[#9a9da0] bg-gradient-to-b from-[#8c8f92] via-[#56595c] to-[#3e4144]',
    flash: 'rounded-[3px] border border-[#f0dca0] bg-gradient-to-b from-[#f1dc93] via-[#e2a83f] to-[#cf7518]',
  };
  return <div className={`flex h-[38px] w-[58px] shrink-0 items-center justify-center overflow-hidden ${looks[look]}`}>{children}</div>;
};

const Taskbar = () => (
  <div className="flex h-[40px] shrink-0 items-center bg-gradient-to-r from-[#14191d] via-[#0b0e12] to-[#101418] text-white">
    <div className="flex w-[60px] shrink-0 items-center pl-[8px]"><Orb /></div>
    <div className="flex gap-[4px]">
      <TaskButton><Firefox /></TaskButton>
      <TaskButton><Explorer /></TaskButton>
      <TaskButton look="open"><Chrome /></TaskButton>
      <TaskButton look="word"><WordIcon /></TaskButton>
      <TaskButton><Vlc /></TaskButton>
      <TaskButton look="flash"><Phone /></TaskButton>
      <TaskButton look="open"><Sticky /></TaskButton>
      <TaskButton look="open"><Talk /></TaskButton>
      <TaskButton look="open"><Skype /></TaskButton>
      <TaskButton look="open"><ControlPanel /></TaskButton>
      <TaskButton look="open"><PowerPoint /></TaskButton>
    </div>
    <div className="ml-auto flex h-full items-center">
      <svg width="8" height="5" viewBox="0 0 8 5" className="mr-[14px]"><path d="M0 5l4-5 4 5z" fill="#fff" /></svg>
      <svg width="15" height="14" viewBox="0 0 15 14" className="mr-[7px]">
        <path d="M1 0v14" stroke="#fff" strokeWidth="1.500" />
        <path d="M2 1h7v2h5l-2 3 2 3H8V7H2z" fill="#fff" />
      </svg>
      <svg width="16" height="14" viewBox="0 0 16 14" className="mr-[9px]">
        <path d="M1 0v7h3V0M5 8h11v5H5z" fill="none" stroke="#fff" />
        <path d="M7 13h7" stroke="#fff" />
      </svg>
      <svg width="16" height="14" viewBox="0 0 16 14" className="mr-[10px]">
        <path d="M0 4h3l4-4v14l-4-4H0z" fill="#e8e8e8" />
        <path d="M10 4c1 2 1 4 0 6M13 2c2 3 2 7 0 10" fill="none" stroke="#a8a8a8" />
      </svg>
      <div className="mt-px w-[66px] text-center text-[12px] leading-[16px] whitespace-nowrap">
        <div>9:49 AM</div>
        <div>10/15/2020</div>
      </div>
      <div className="ml-[4px] h-[38px] w-[13px] rounded-[2px] border border-[#50555a] bg-gradient-to-b from-[#4a4e52] to-[#24272a]" />
    </div>
  </div>
);

export default function App() {
  return (
    <div className={`relative flex h-[768px] w-[1366px] flex-col overflow-hidden bg-[#bfdbff] text-[11px] ${FONT}`}>
      <TitleBar />
      <OfficeButton />
      <TabsRow />
      <Ribbon />
      <HRuler />
      <div className="flex min-h-0 flex-1">
        <VRuler />
        <Canvas />
        <Scrollbar />
      </div>
      <StatusBar />
      <Taskbar />
    </div>
  );
}
